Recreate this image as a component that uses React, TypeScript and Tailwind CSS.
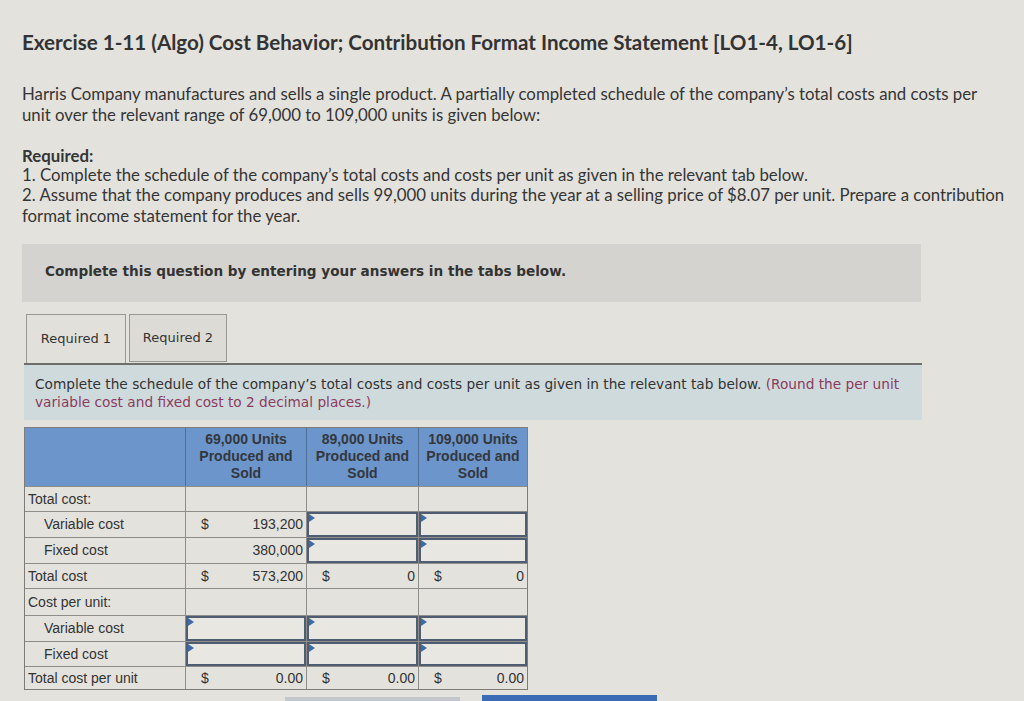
import React from 'react';

const lato = { fontFamily: 'Lato, "Open Sans", sans-serif' };

function Marker() {
  return (
    <span className="absolute left-0 top-0 w-0 h-0 border-t-[4px] border-b-[4px] border-l-[6px] border-t-transparent border-b-transparent border-l-[#3f6aa8]" />
  );
}

function InputCell() {
  return (
    <div className="relative h-full border-2 border-[#4e5d72] bg-[#e9e7e2]">
      <Marker />
    </div>
  );
}

function ValueCell({ dollar, value }: { dollar?: boolean; value?: string }) {
  return (
    <div className="flex h-full items-center justify-between pl-[15px] pr-[3px]">
      <span>{dollar ? '$' : ''}</span>
      <span>{value}</span>
    </div>
  );
}

type Cell = { kind: 'blank' } | { kind: 'input' } | { kind: 'value'; dollar?: boolean; value?: string };

// row heights include the 1px top border (border-box)
const rows: { label: string; indent?: boolean; h: string; cells: Cell[] }[] = [
  { label: 'Total cost:', h: 'h-[25px]', cells: [{ kind: 'blank' }, { kind: 'blank' }, { kind: 'blank' }] },
  { label: 'Variable cost', indent: true, h: 'h-[26px]', cells: [{ kind: 'value', dollar: true, value: '193,200' }, { kind: 'input' }, { kind: 'input' }] },
  { label: 'Fixed cost', indent: true, h: 'h-[26px]', cells: [{ kind: 'value', value: '380,000' }, { kind: 'input' }, { kind: 'input' }] },
  { label: 'Total cost', h: 'h-[25px]', cells: [{ kind: 'value', dollar: true, value: '573,200' }, { kind: 'value', dollar: true, value: '0' }, { kind: 'value', dollar: true, value: '0' }] },
  { label: 'Cost per unit:', h: 'h-[27px]', cells: [{ kind: 'blank' }, { kind: 'blank' }, { kind: 'blank' }] },
  { label: 'Variable cost', indent: true, h: 'h-[26px]', cells: [{ kind: 'input' }, { kind: 'input' }, { kind: 'input' }] },
  { label: 'Fixed cost', indent: true, h: 'h-[25px]', cells: [{ kind: 'input' }, { kind: 'input' }, { kind: 'input' }] },
  { label: 'Total cost per unit', h: 'h-[23px]', cells: [{ kind: 'value', dollar: true, value: '0.00' }, { kind: 'value', dollar: true, value: '0.00' }, { kind: 'value', dollar: true, value: '0.00' }] },
];

const heads = ['69,000 Units', '89,000 Units', '109,000 Units'];

export default function App() {
  return (
    <div className="min-h-[701px] w-[1024px] overflow-hidden bg-[#e4e2dd] text-[#2e2e2e]">
      <div className="px-[22px] pt-[30px]">
        <h1 className="text-[20.6px] font-bold leading-[24px] text-[#333]" style={lato}>
          Exercise 1-11 (Algo) Cost Behavior; Contribution Format Income Statement [LO1-4, LO1-6]
        </h1>
        <p className="mt-[29px] w-[975px] text-[16.8px] leading-[21px] text-[#353535]" style={lato}>
          Harris Company manufactures and sells a single product. A partially completed schedule of the company’s total costs and costs per unit over the relevant range of 69,000 to 109,000 units is given below:
        </p>
        <div className="mt-[21px] w-[992px] text-[16.8px] leading-[19px] text-[#353535]" style={lato}>
          <p className="font-bold">Required:</p>
          <p>1. Complete the schedule of the company’s total costs and costs per unit as given in the relevant tab below.</p>
          <p className="leading-[21px]">
            2. Assume that the company produces and sells 99,000 units during the year at a selling price of $8.07 per unit. Prepare a contribution format income statement for the year.
          </p>
        </div>
      </div>

      <div className="ml-[22px] mt-[18px] w-[899px] h-[58px] bg-[#d4d3cf] pl-[23px] pt-[17px]">
        <p className="text-[13.6px] font-bold text-[#333]" style={{ fontFamily: '"DejaVu Sans", Verdana, sans-serif' }}>
          Complete this question by entering your answers in the tabs below.
        </p>
      </div>

      <div className="ml-[24px] mt-[12px] w-[898px]" style={{ fontFamily: '"DejaVu Sans", Verdana, sans-serif' }}>
        <div className="flex items-end gap-[3px] pl-[2px] text-[13px] text-[#333]">
          <div className="flex h-[49px] w-[100px] items-center justify-center border border-b-0 border-[#9a9893] bg-[#e2e0db]">
            Required 1
          </div>
          <div className="flex h-[48px] w-[98px] items-center justify-center border border-[#9a9893] bg-[#dddbd6] mb-[1px]">
            Required 2
          </div>
        </div>
        <div className="border-t-2 border-[#6f6e6a] bg-[#cfdadd] px-[11px] pt-[10px] pb-[9px] text-[13.7px] leading-[18px] text-[#333]">
          Complete the schedule of the company’s total costs and costs per unit as given in the relevant tab below.{' '}
          <span className="text-[#8b3b5c]">(Round the per unit variable cost and fixed cost to 2 decimal places.)</span>
        </div>
      </div>

      <div
        className="ml-[24px] mt-[7px] w-[504px] border border-[#7d7c78] text-[14px] text-[#333]"
        style={{ fontFamily: '"Liberation Sans", Arial, sans-serif' }}
      >
        <div className="grid grid-cols-[161px_121px_112px_108px] h-[58px] bg-[#6b95cb] font-bold leading-[17px] text-[#34373d]">
          <div className="border-r border-[#4f6f99]" />
          {heads.map((h, i) => (
            <div key={h} className={'flex flex-col items-center pt-[3px] ' + (i < 2 ? 'border-r border-[#4f6f99]' : '')}>
              <span>{h}</span>
              <span>Produced and</span>
              <span>Sold</span>
            </div>
          ))}
        </div>
        {rows.map((r, ri) => (
          <div key={ri} className={'grid grid-cols-[161px_121px_112px_108px] border-t border-[#8e8d89] ' + r.h}>
            <div className={'flex items-center border-r border-[#8e8d89] ' + (r.indent ? 'pl-[19px]' : 'pl-[3px]')}>{r.label}</div>
            {r.cells.map((c, ci) => (
              <div key={ci} className={ci < 2 ? 'border-r border-[#8e8d89]' : ''}>
                {c.kind === 'input' && <InputCell />}
                {c.kind === 'value' && <ValueCell dollar={c.dollar} value={c.value} />}
              </div>
            ))}
          </div>
        ))}
      </div>

      <div className="mt-[7px] flex gap-[22px] pl-[285px]">
        <div className="h-[20px] w-[175px] bg-[#c3c6ca]" />
        <div className="-mt-[2px] h-[20px] w-[175px] bg-[#3b6bb4]" />
      </div>
    </div>
  );
}
